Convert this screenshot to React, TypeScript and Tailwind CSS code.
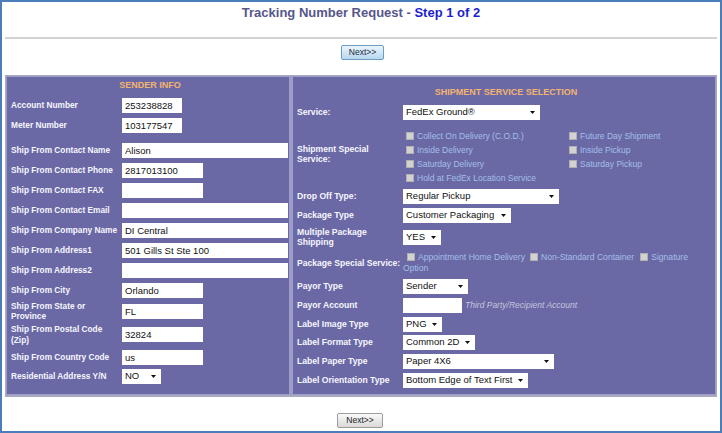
import React from "react";

type SenderRow = {
  label: React.ReactNode;
  value?: string;
  box: string;
  row: string;
  select?: boolean;
};

const senderRows: SenderRow[] = [
  { label: "Account Number", value: "253238828", box: "w-[60px]", row: "h-[20px]" },
  { label: "Meter Number", value: "103177547", box: "w-[60px]", row: "h-[20px] mb-[5px]" },
  { label: "Ship From Contact Name", value: "Alison", box: "w-[166px]", row: "h-[20px]" },
  { label: "Ship From Contact Phone", value: "2817013100", box: "w-[81px]", row: "h-[20px]" },
  { label: "Ship From Contact FAX", value: "", box: "w-[81px]", row: "h-[20px]" },
  { label: "Ship From Contact Email", value: "", box: "w-[166px]", row: "h-[20px]" },
  { label: "Ship From Company Name", value: "DI Central", box: "w-[166px]", row: "h-[20px]" },
  { label: "Ship From Address1", value: "501 Gills St Ste 100", box: "w-[166px]", row: "h-[20px]" },
  { label: "Ship From Address2", value: "", box: "w-[166px]", row: "h-[20px]" },
  { label: "Ship From City", value: "Orlando", box: "w-[81px]", row: "h-[20px]" },
  {
    label: (
      <>
        Ship From State or
        <br />
        Province
      </>
    ),
    value: "FL",
    box: "w-[81px]",
    row: "h-[22px]",
  },
  {
    label: (
      <>
        Ship From Postal Code
        <br />
        (Zip)
      </>
    ),
    value: "32824",
    box: "w-[81px]",
    row: "h-[25px]",
  },
  { label: "Ship From Country Code", value: "us", box: "w-[81px]", row: "h-[20px]" },
  { label: "Residential Address Y/N", value: "NO", box: "w-[39px]", row: "h-[19px]", select: true },
];

function Caret() {
  return (
    <svg width="5" height="3" viewBox="0 0 5 3" className="shrink-0">
      <path d="M0 0h5L2.5 3z" fill="#111" />
    </svg>
  );
}

function Select({ value, className }: { value: React.ReactNode; className: string }) {
  return (
    <div
      className={`flex h-[15px] items-center justify-between bg-white pl-[3px] pr-[5px] text-[9.5px] text-[#111] ${className}`}
    >
      <span className="whitespace-nowrap">{value}</span>
      <Caret />
    </div>
  );
}

function TextBox({ value, className }: { value: string; className: string }) {
  return (
    <input
      readOnly
      value={value}
      className={`h-[15px] bg-white px-[3px] text-[9.5px] text-[#111] outline-none ${className}`}
    />
  );
}

function Check({ className = "" }: { className?: string }) {
  return (
    <span
      className={`inline-block h-[8px] w-[8px] shrink-0 border border-[#b0b0b0] bg-[#d2d2d2] align-[-1px] ${className}`}
    />
  );
}

function NextButton({ blue }: { blue?: boolean }) {
  return (
    <button
      className={
        blue
          ? "h-[15px] w-[43px] rounded-[2px] border border-[#6f9cc2] bg-gradient-to-b from-[#eaf5fc] to-[#b7d8ee] text-[8.5px] leading-none text-[#1d2a3a]"
          : "h-[15px] w-[46px] rounded-[2px] border border-[#9c9c9c] bg-gradient-to-b from-[#fafafa] to-[#d9d9d9] text-[8.5px] leading-none text-[#222]"
      }
    >
      Next&gt;&gt;
    </button>
  );
}

function RightRow({
  label,
  row,
  children,
  top,
}: {
  label: React.ReactNode;
  row: string;
  children: React.ReactNode;
  top?: boolean;
}) {
  return (
    <div className={`flex ${top ? "items-start" : "items-center"} ${row}`}>
      <div className="w-[106px] shrink-0 self-center text-[8.6px] font-bold leading-[10.5px] text-[#f6f6ff]">
        {label}
      </div>
      {children}
    </div>
  );
}

export default function App() {
  return (
    <div
      className="flex h-[433px] w-[722px] flex-col border-2 border-[#4a7dba] bg-white"
      style={{ fontFamily: '"Liberation Sans", Arial, sans-serif' }}
    >
      <h1 className="mt-[2px] h-[18px] text-center text-[13px] font-bold leading-[18px] text-[#56568c]">
        Tracking Number Request - <span className="text-[#1e1ecf]">Step 1 of 2</span>
      </h1>
      <div className="mx-[3px] mt-[15px] h-[2px] bg-[#d2d2d2]" />
      <div className="mt-[6px] flex justify-center pl-[3px]">
        <NextButton blue />
      </div>

      <div className="mx-[3px] mt-[15px] flex border border-b-[2px] border-[#a9a9c2] bg-[#9d9cc8] p-[1px]">
        {/* sender info */}
        <section className="w-[282px] shrink-0 bg-[#6b69a5] pb-[8px] pl-[4px]">
          <h2 className="flex h-[18px] items-center justify-center text-[9px] font-bold text-[#f2b46e]">
            SENDER INFO
          </h2>
          {senderRows.map((r, i) => (
            <div key={i} className={`flex items-center ${r.row}`}>
              <div className="w-[111px] shrink-0 text-[8.3px] font-bold leading-[10.5px] text-[#f6f6ff]">
                {r.label}
              </div>
              {r.select ? (
                <Select value={r.value} className={r.box} />
              ) : (
                <TextBox value={r.value ?? ""} className={r.box} />
              )}
            </div>
          ))}
        </section>

        <div className="w-[4px] shrink-0" />

        {/* shipment service */}
        <section className="flex-1 bg-[#6b69a5] pb-[5px] pl-[4px] pt-[6px]">
          <h2 className="flex h-[19px] items-center justify-center text-[9px] font-bold text-[#f2b46e]">
            SHIPMENT SERVICE SELECTION
          </h2>
          <RightRow label="Service:" row="h-[20px]">
            <Select value="FedEx Ground®" className="w-[137px]" />
          </RightRow>
          <RightRow
            label={
              <>
                Shipment Special
                <br />
                Service:
              </>
            }
            row="h-[64px]"
            top
          >
            <div className="grid grid-cols-[163px_auto] pl-[3px] pt-[7px] text-[8.5px] leading-[14px] text-[#a3bfea]">
              <span className="flex items-center gap-[3px]">
                <Check /> Collect On Delivery (C.O.D.)
              </span>
              <span className="flex items-center gap-[3px]">
                <Check /> Future Day Shipment
              </span>
              <span className="flex items-center gap-[3px]">
                <Check /> Inside Delivery
              </span>
              <span className="flex items-center gap-[3px]">
                <Check /> Inside Pickup
              </span>
              <span className="flex items-center gap-[3px]">
                <Check /> Saturday Delivery
              </span>
              <span className="flex items-center gap-[3px]">
                <Check /> Saturday Pickup
              </span>
              <span className="flex items-center gap-[3px] whitespace-nowrap">
                <Check /> Hold at FedEx Location Service
              </span>
            </div>
          </RightRow>
          <RightRow label="Drop Off Type:" row="h-[21px]">
            <Select value="Regular Pickup" className="w-[156px]" />
          </RightRow>
          <RightRow label="Package Type" row="h-[17px]">
            <Select value="Customer Packaging" className="w-[108px]" />
          </RightRow>
          <RightRow
            label={
              <>
                Multiple Package
                <br />
                Shipping
              </>
            }
            row="h-[26px]"
          >
            <Select value="YES" className="w-[38px]" />
          </RightRow>
          <RightRow label="Package Special Service:" row="h-[26px]">
            <div className="text-[8.6px] leading-[11px] text-[#a3bfea]">
              <Check className="ml-[4px] mr-[3px]" />
              Appointment Home Delivery
              <Check className="ml-[5px] mr-[3px]" />
              Non-Standard Container
              <Check className="ml-[6px] mr-[3px]" />
              Signature
              <br />
              Option
            </div>
          </RightRow>
          <RightRow label="Payor Type" row="h-[20px]">
            <Select value="Sender" className="w-[65px]" />
          </RightRow>
          <RightRow label="Payor Account" row="h-[18px]">
            <TextBox value="" className="w-[59px]" />
            <span className="ml-[3px] text-[8.5px] italic text-[#c4c4de]">
              Third Party/Recipient Account
            </span>
          </RightRow>
          <RightRow label="Label Image Type" row="h-[20px]">
            <Select value="PNG" className="w-[39px]" />
          </RightRow>
          <RightRow label="Label Format Type" row="h-[17px]">
            <Select value="Common 2D" className="w-[72px]" />
          </RightRow>
          <RightRow label="Label Paper Type" row="h-[20px]">
            <Select value="Paper 4X6" className="w-[151px]" />
          </RightRow>
          <RightRow label="Label Orientation Type" row="h-[18px]">
            <Select value="Bottom Edge of Text First" className="w-[125px]" />
          </RightRow>
        </section>
      </div>

      <div className="mt-[16px] flex justify-center pr-[2px]">
        <NextButton />
      </div>
    </div>
  );
}
